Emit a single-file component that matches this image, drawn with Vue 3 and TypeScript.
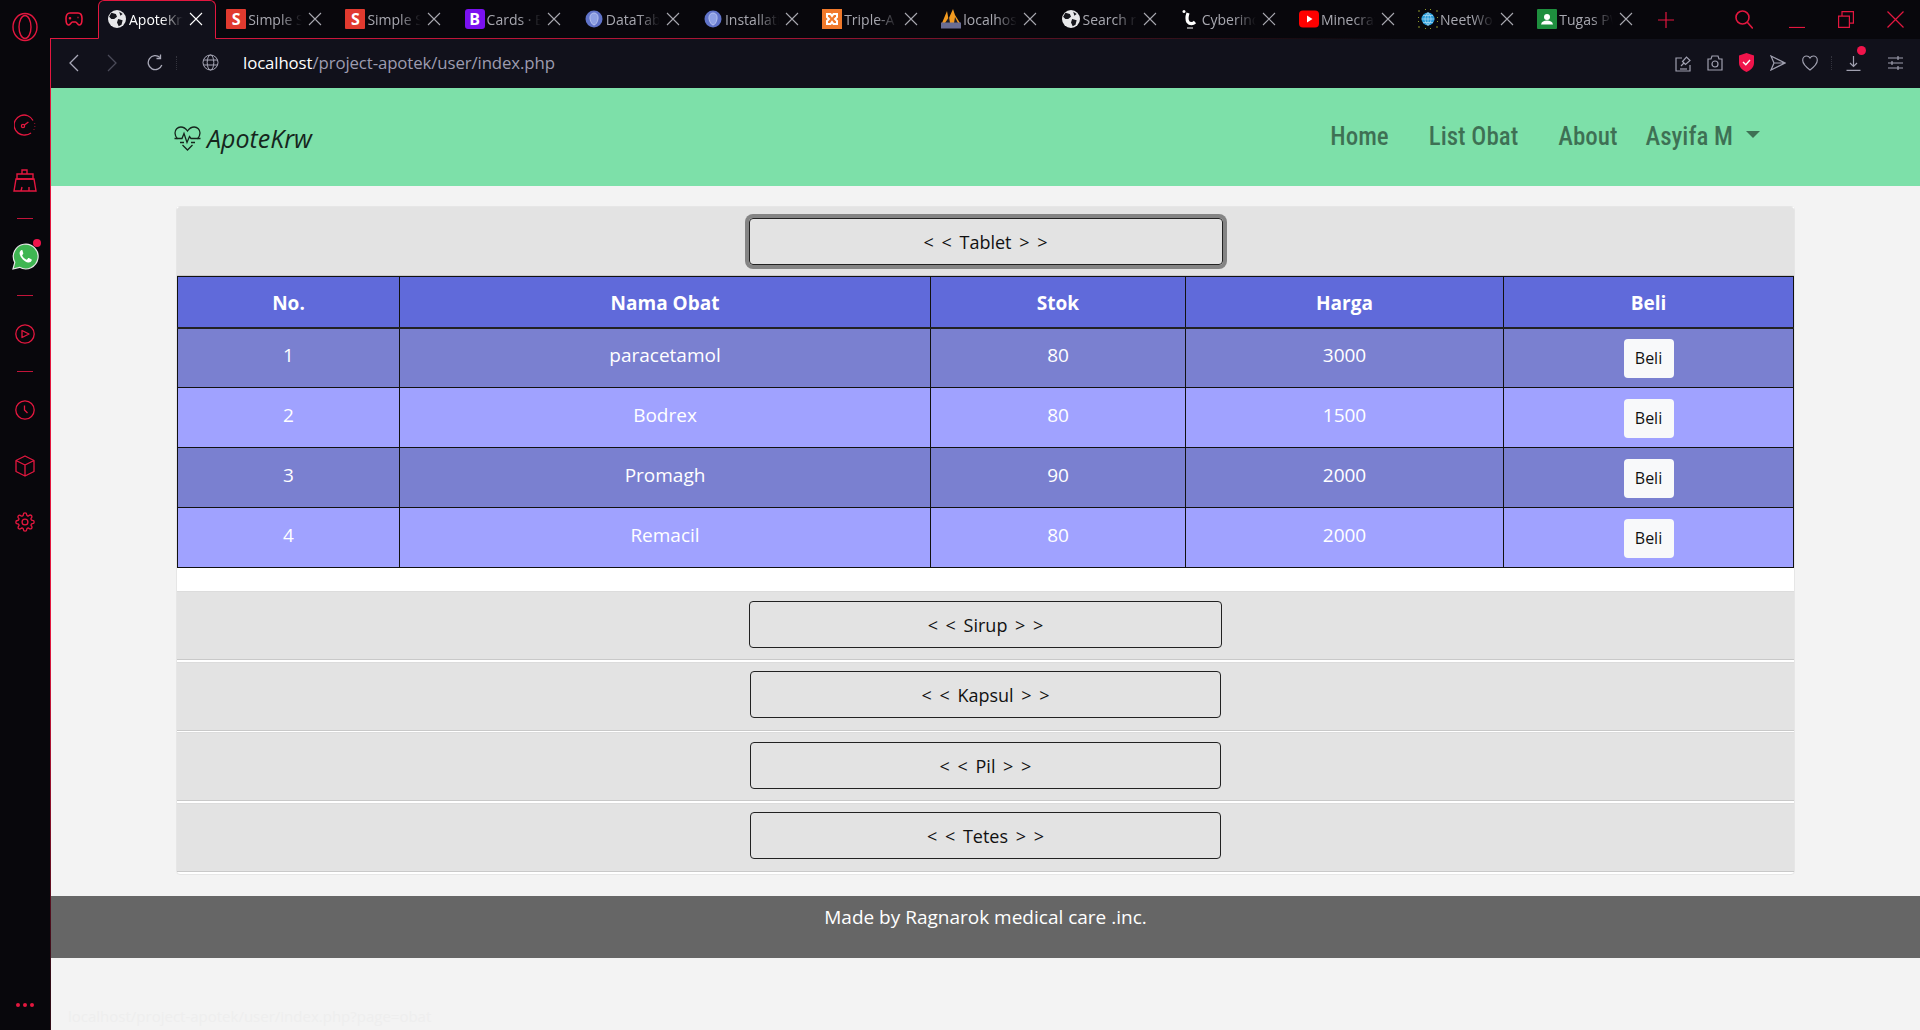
<script setup lang="ts">
interface Tab { title: string; icon: string; active?: boolean }
const tabs: Tab[] = [
  { title: 'ApoteKrw', icon: 'globe', active: true },
  { title: 'Simple Sidebar', icon: 's' },
  { title: 'Simple Sidebar', icon: 's' },
  { title: 'Cards · Bootstrap', icon: 'b' },
  { title: 'DataTables', icon: 'orb' },
  { title: 'Installation', icon: 'orb' },
  { title: 'Triple-A', icon: 'xampp' },
  { title: 'localhost', icon: 'pma' },
  { title: 'Search results', icon: 'globe' },
  { title: 'Cyberindo', icon: 'cyber' },
  { title: 'Minecraft', icon: 'yt' },
  { title: 'NeetWork', icon: 'neet' },
  { title: 'Tugas PWD', icon: 'class' }
]
interface Row { no: number; nama: string; stok: number; harga: number }
const rows: Row[] = [
  { no: 1, nama: 'paracetamol', stok: 80, harga: 3000 },
  { no: 2, nama: 'Bodrex', stok: 80, harga: 1500 },
  { no: 3, nama: 'Promagh', stok: 90, harga: 2000 },
  { no: 4, nama: 'Remacil', stok: 80, harga: 2000 }
]
const others = [
  { name: 'Sirup', width: 473 },
  { name: 'Kapsul', width: 471 },
  { name: 'Pil', width: 471 },
  { name: 'Tetes', width: 471 }
]
</script>

<template>
  <div class="browser">
    <aside class="side">
      <svg class="logo" width="26" height="30" viewBox="0 0 26 30" fill="none" stroke="#e3173f" stroke-width="1.4">
        <ellipse cx="13" cy="15" rx="12" ry="13.5" />
        <ellipse cx="13" cy="15" rx="6" ry="11.5" />
      </svg>
      <div class="side-icons">
        <svg class="si s1" width="22" height="22" viewBox="0 0 22 22" fill="none" stroke="#e3173f" stroke-width="1.3">
          <path d="M19 6.5A10 10 0 1 0 11 21a10 10 0 0 0 6-2" /><path d="M20.6 9v.6M20.8 12v.6M20 15v.6" /><circle cx="9" cy="12" r="1.6" /><path d="M10.4 11l4-3" />
        </svg>
        <svg class="si s2" width="24" height="24" viewBox="0 0 24 24" fill="none" stroke="#e3173f" stroke-width="1.4">
          <path d="M9 5V1h5v4" /><path d="M4 5h16v5H4z" /><path d="M3 10h18l2 12H1z" /><path d="M8 22l1-4M16 22v-4" />
        </svg>
        <span class="rule r1"></span>
        <div class="wa">
          <svg width="27" height="27" viewBox="0 0 27 27">
            <path d="M1 26l1.8-6.6A12.4 12.4 0 1 1 7.600 24.300z" fill="#3fb652" stroke="#e8e8e8" stroke-width="1.200" />
            <path d="M9.500 7c-1.200.6-2.200 2-1.800 4 .6 3.500 4.800 8 8.500 8.500 1.800.2 3-.8 3.500-2 .2-.6 0-1-.4-1.200l-2.400-1.200c-.5-.2-.8 0-1 .3l-.8 1c-.3.300-.6.300-1 .1-1.600-.8-3-2.100-3.800-3.700-.2-.4-.1-.6.100-.9l.7-.9c.2-.3.200-.6.100-.9L10.400 7.300c-.2-.4-.5-.5-.9-.3z" fill="#fff" />
          </svg>
          <span class="dot"></span>
        </div>
        <span class="rule r2"></span>
        <svg class="si s3" width="20" height="20" viewBox="0 0 20 20" fill="none" stroke="#e3173f" stroke-width="1.3">
          <circle cx="10" cy="10" r="9.200" /><path d="M7 6.500v7l7-3.500z" stroke-linejoin="round" />
        </svg>
        <span class="rule r3"></span>
        <svg class="si s4" width="20" height="20" viewBox="0 0 20 20" fill="none" stroke="#e3173f" stroke-width="1.3">
          <circle cx="10" cy="10" r="9.200" /><path d="M9.500 5.500V10l3 3" />
        </svg>
        <svg class="si s5" width="20" height="22" viewBox="0 0 20 22" fill="none" stroke="#e3173f" stroke-width="1.3">
          <path d="M10 1l9 4.500v11L10 21l-9-4.500v-11zM1 5.500L10 10l9-4.500M10 10v11" stroke-linejoin="round" />
        </svg>
        <svg class="si s6" width="20" height="20" viewBox="0 0 24 24" fill="none" stroke="#e3173f" stroke-width="1.600">
          <circle cx="12" cy="12" r="3.500" />
          <path d="M19.400 15a1.650 1.650 0 0 0 .33 1.820l.06.06a2 2 0 1 1-2.830 2.830l-.06-.06a1.650 1.650 0 0 0-2.800 1.170V21a2 2 0 1 1-4 0v-.09a1.650 1.650 0 0 0-2.900-1.100l-.06.06a2 2 0 1 1-2.830-2.830l.06-.06a1.650 1.650 0 0 0-1.170-2.800H3a2 2 0 1 1 0-4h.09a1.650 1.650 0 0 0 1.100-2.900l-.06-.06a2 2 0 1 1 2.830-2.830l.06.06a1.650 1.650 0 0 0 1.820.33H9a1.650 1.650 0 0 0 1-1.510V3a2 2 0 1 1 4 0v.09a1.650 1.650 0 0 0 2.800 1.170l.06-.06a2 2 0 1 1 2.830 2.830l-.06.06a1.650 1.650 0 0 0-.33 1.820V9a1.650 1.650 0 0 0 1.510 1H21a2 2 0 1 1 0 4h-.09a1.650 1.650 0 0 0-1.510 1z" />
        </svg>
      </div>
      <div class="more"><i></i><i></i><i></i></div>
    </aside>

    <div class="main">
      <header class="strip">
        <svg class="game" width="18" height="14" viewBox="0 0 18 14" fill="none" stroke="#f0193f" stroke-width="1.600">
          <path d="M5 1h8c2.500 0 4 2 4 5.500 0 4-1 6.500-2.500 6.500-1.800 0-2.500-3-4-3H7.500C6 10 5.300 13 3.500 13 2 13 1 10.500 1 6.500 1 3 2.500 1 5 1z" /><path d="M5 5v2.500M3.800 6.200h2.400M12.500 5.500h1" />
        </svg>
        <div class="tabs">
          <div v-for="t in tabs" :key="t.title + t.icon" class="tab" :class="{ active: t.active }">
            <span class="fav">
              <svg v-if="t.icon === 'globe'" viewBox="0 0 16 16" width="18" height="18"><circle cx="8" cy="8" r="8" fill="#e8e8ea" /><path d="M3 2.500l4 1 1 2.500-2.500 2L3 8 1 6zM9 8l4 1-1 4-2.500 1.500L8 11z" fill="#16161c" /><path d="M10 1.500l3 2-2 1.500z" fill="#16161c" /></svg>
              <span v-else-if="t.icon === 's'" class="sq red">S</span>
              <span v-else-if="t.icon === 'b'" class="sq purple">B</span>
              <svg v-else-if="t.icon === 'orb'" viewBox="0 0 18 18" width="18" height="18"><circle cx="9" cy="9" r="8.500" fill="#6073c9" /><path d="M9 3c3 0 4.500 2.500 4 6s-2.500 6-4 6-3.500-3-4-6 1-6 4-6z" fill="#8ea0e4" stroke="#c1cbf2" stroke-width=".8" /></svg>
              <svg v-else-if="t.icon === 'xampp'" viewBox="0 0 20 20" width="20" height="20"><rect width="20" height="20" fill="#f0792b" /><path d="M5 5h3.500l1.500 2 1.500-2H15v3l-2 2 2 2v3h-3.500L10 13l-1.500 2H5v-3l2-2-2-2z" fill="none" stroke="#fff" stroke-width="2" /></svg>
              <svg v-else-if="t.icon === 'pma'" viewBox="0 0 20 20" width="20" height="20"><path d="M1 14L6 2l1.500 8L12 0l2 6 5 8z" fill="#f29a1f" /><path d="M4 14L8 8l1 6zM13 14l1-6 3 6z" fill="#1f1f29" /><rect y="13.500" width="20" height="6" fill="#6a6d93" /></svg>
              <svg v-else-if="t.icon === 'cyber'" viewBox="0 0 18 20" width="18" height="20"><circle cx="3" cy="2.500" r="1.500" fill="#fff" /><path d="M7 4c-1 3-2 6 0 9 2 2.500 5 2 7 0" fill="none" stroke="#fff" stroke-width="3.200" /><path d="M6 19h6" stroke="#fff" /></svg>
              <svg v-else-if="t.icon === 'yt'" viewBox="0 0 20 18" width="20" height="18"><rect width="20" height="17" y=".5" rx="4" fill="#f00" /><path d="M8 5.500v7l5.500-3.500z" fill="#fff" /></svg>
              <svg v-else-if="t.icon === 'neet'" viewBox="0 0 20 20" width="20" height="20"><circle cx="10" cy="10" r="6.500" fill="#2b9bd8" /><path d="M3.500 10h13M10 3.500v13M5 6.500h10M5 13.500h10M10 3.500c-4 4-4 9 0 13M10 3.500c4 4 4 9 0 13" stroke="#bfe6fa" stroke-width=".6" fill="none" /><path d="M1 1v2M7 .5h1M12 .5h1M19 1v2M1 17v2M7 19.500h1M12 19.500h1M19 17v2M.5 8v1M.5 12v1M19.500 8v1M19.500 12v1" stroke="#8f9a2a" /></svg>
              <svg v-else viewBox="0 0 20 20" width="20" height="20"><rect width="20" height="20" rx="1" fill="#1e8e3e" /><circle cx="10" cy="8" r="3" fill="#fff" /><path d="M4 15.500c.5-3 3-4 6-4s5.500 1 6 4z" fill="#fff" /></svg>
            </span>
            <span class="title">{{ t.title }}</span>
            <svg class="x" width="14" height="14" viewBox="0 0 14 14" fill="none" stroke="currentColor" stroke-width="1.100"><path d="M1 1l12 12M13 1L1 13" /></svg>
          </div>
          <svg class="plus" width="16" height="16" viewBox="0 0 16 16" stroke="#e3173f" stroke-width="1.200"><path d="M8 0v16M0 8h16" /></svg>
        </div>
        <div class="win">
          <svg class="find" width="18" height="19" viewBox="0 0 18 19" fill="none" stroke="#e3173f" stroke-width="1.600"><circle cx="7.500" cy="7.500" r="6.500" /><path d="M12.300 12.300l5.500 6.200" /></svg>
          <svg class="min" width="16" height="16" viewBox="0 0 16 16" stroke="#e3173f" stroke-width="1.200"><path d="M0 15.500h16" /></svg>
          <svg width="16" height="17" viewBox="0 0 16 17" fill="none" stroke="#e3173f" stroke-width="1.200"><path d="M.6 5.100h10.800v11.300H.6zM4 5.100V.6h11.400v11.500h-4" /></svg>
          <svg width="17" height="17" viewBox="0 0 17 17" fill="none" stroke="#e3173f" stroke-width="1.200"><path d="M.5.500l16 16M16.500.500l-16 16" /></svg>
        </div>
      </header>

      <div class="lower">
        <div class="toolbar">
          <svg width="10" height="18" viewBox="0 0 10 18" fill="none" stroke="#a9a9b8" stroke-width="1.300"><path d="M9 1L1 9l8 8" /></svg>
          <svg class="fwd" width="10" height="18" viewBox="0 0 10 18" fill="none" stroke="#4a4a58" stroke-width="1.300"><path d="M1 1l8 8-8 8" /></svg>
          <svg class="rel" width="17" height="17" viewBox="0 0 17 17" fill="none" stroke="#a9a9b8" stroke-width="1.300"><path d="M14.800 11A7 7 0 1 1 13 3.500" /><path d="M13.500.5v4h-4" /></svg>
          <span class="vd"></span>
          <svg class="earth" width="17" height="17" viewBox="0 0 17 17" fill="none" stroke="#a9a9b8" stroke-width="1"><circle cx="8.500" cy="8.500" r="7.500" /><ellipse cx="8.500" cy="8.500" rx="3.300" ry="7.500" /><path d="M1.500 6h14M1.500 11h14" /></svg>
          <div class="url"><b>localhost</b>/project-apotek/user/index.php</div>
          <div class="tools">
            <svg width="16" height="18" viewBox="0 0 16 18" fill="none" stroke="#a0a0b0" stroke-width="1.200"><path d="M7 4H1v13h14v-6" /><path d="M6 12l3-3-1.500-1.500 4-4.500 3.500 3.500-4.500 4L9 9" /><path d="M5 15h7" /></svg>
            <svg width="16" height="16" viewBox="0 0 16 16" fill="none" stroke="#a0a0b0" stroke-width="1.200"><path d="M1 4h3l1-3h6l1 3h3v11H1z" /><circle cx="8" cy="9" r="3" /></svg>
            <svg width="15" height="19" viewBox="0 0 15 19"><path d="M7.500 0L15 2.500V10c0 4-3.500 7.500-7.500 9C3.500 17.500 0 14 0 10V2.500z" fill="#f0144b" /><path d="M4 9l2.800 2.800L11 7" fill="none" stroke="#fff" stroke-width="1.400" /></svg>
            <svg width="16" height="16" viewBox="0 0 16 16" fill="none" stroke="#a0a0b0" stroke-width="1.200"><path d="M1 1l14 7-14 7 3-7zM4 8h11" /></svg>
            <svg width="16" height="16" viewBox="0 0 16 16" fill="none" stroke="#a0a0b0" stroke-width="1.200"><path d="M8 15C4 12 .7 9 .7 5.300 .7 2.800 2.600 1 4.600 1 6 1 7.300 1.800 8 3c.7-1.200 2-2 3.400-2 2 0 3.900 1.800 3.900 4.300C15.300 9 12 12 8 15z" /></svg>
            <span class="vd small"></span>
            <span class="dl">
              <svg width="15" height="16" viewBox="0 0 15 16" fill="none" stroke="#a0a0b0" stroke-width="1.200"><path d="M7.500 1v10M4 8l3.500 3.500L11 8M.5 15.400h14" /></svg>
              <i></i>
            </span>
            <svg class="tune" width="17" height="16" viewBox="0 0 17 16" fill="none" stroke="#a0a0b0" stroke-width="1.200"><path d="M1 3h15M1 8h15M1 13h15M11 1v4M5 6v4M11 11v4" /></svg>
          </div>
        </div>

        <div class="page">
          <nav class="navbar">
            <a class="brand">
              <svg width="27" height="25" viewBox="0 0 27 25" fill="none" stroke="#16261d" stroke-width="1.300">
                <path d="M3.500 13C1.500 10.500 1 9 1 7c0-3.300 2.500-6 5.800-6 2.800 0 5 1.500 6.700 4 1.700-2.500 3.900-4 6.700-4C23.500 1 26 3.700 26 7c0 2-.5 3.500-2.500 6" />
                <path d="M0.500 12.500H8l2-5 3 9 2.500-6 1.500 2h9.500" />
                <path d="M6 16.500h4M17 16.500h4M8.500 19l5 5 5-5" />
              </svg>
              <span>ApoteKrw</span>
            </a>
            <ul class="links">
              <li>Home</li>
              <li>List Obat</li>
              <li>About</li>
              <li class="user">Asyifa M <i class="caret"></i></li>
            </ul>
          </nav>

          <section class="accordion">
            <div class="card first">
              <div class="card-head">
                <button class="toggle focus">&lt; &lt; Tablet &gt; &gt;</button>
              </div>
              <div class="card-body">
                <table>
                  <colgroup>
                    <col class="c1" /><col class="c2" /><col class="c3" /><col class="c4" /><col />
                  </colgroup>
                  <thead>
                    <tr><th>No.</th><th>Nama Obat</th><th>Stok</th><th>Harga</th><th>Beli</th></tr>
                  </thead>
                  <tbody>
                    <tr v-for="r in rows" :key="r.no">
                      <td>{{ r.no }}</td>
                      <td>{{ r.nama }}</td>
                      <td>{{ r.stok }}</td>
                      <td>{{ r.harga }}</td>
                      <td class="act"><button class="beli">Beli</button></td>
                    </tr>
                  </tbody>
                </table>
              </div>
            </div>
            <div v-for="o in others" :key="o.name" class="card">
              <div class="card-head">
                <button class="toggle" :style="{ width: o.width + 'px' }">&lt; &lt; {{ o.name }} &gt; &gt;</button>
              </div>
            </div>
          </section>

          <footer class="foot">Made by Ragnarok medical care .inc.</footer>
          <div class="status">localhost/project-apotek/user/index.php?page=obat</div>
        </div>
      </div>
    </div>
  </div>
</template>

<style>
html, body { margin: 0; background: #f3f3f3; overflow: hidden; }
</style>

<style scoped>
.browser {
  display: flex;
  width: 1920px;
  height: 1030px;
  overflow: hidden;
  font-family: "Open Sans", "Noto Sans", sans-serif;
  background: #f3f3f3;
}
.side {
  width: 50px;
  flex: none;
  background: #08070c;
  display: flex;
  flex-direction: column;
  align-items: center;
}
.logo { margin-top: 12px; }
.side-icons { display: flex; flex-direction: column; align-items: center; margin-top: 72px; }
.si { display: block; }
.s2 { margin-top: 33px; }
.rule { width: 16px; height: 1px; background: #c2143a; }
.r1 { margin-top: 25px; }
.wa { position: relative; margin-top: 24px; height: 27px; }
.wa svg { display: block; }
.dot { position: absolute; right: -2px; top: -4px; width: 8px; height: 8px; border-radius: 50%; background: #f0144b; }
.r2 { margin-top: 25px; }
.s3 { margin-top: 28px; }
.r3 { margin-top: 27px; }
.s4 { margin-top: 28px; }
.s5 { margin-top: 35px; }
.s6 { margin-top: 35px; }
.more { margin-top: auto; margin-bottom: 23px; display: flex; gap: 3px; }
.more i { width: 4px; height: 4px; border-radius: 50%; background: #e3173f; }

.main { flex: 1; min-width: 0; display: flex; flex-direction: column; }
.strip {
  height: 39px;
  flex: none;
  background: #08070c;
  display: flex;
  align-items: flex-start;
  position: relative;
  box-sizing: border-box;
  background-image: linear-gradient(90deg, #e3173f 0, #a01533 40%, #2a1018 62%, #08070c 72%);
  background-size: 100% 1px;
  background-position: 0 38px;
  background-repeat: no-repeat;
}
.game { margin: 12px 0 0 15px; flex: none; }
.tabs { display: flex; align-items: flex-start; margin-left: 15px; }
.tab {
  width: 119.2px;
  height: 39px;
  box-sizing: border-box;
  padding-left: 9px;
  padding-bottom: 1px;
  display: flex;
  align-items: center;
  flex: none;
  color: #a8a8b0;
  font-size: 14px;
  position: relative;
}
.tab.active {
  color: #fff;
  background: #11111b;
  border: 1px solid #e3173f;
  border-bottom-color: #11111b;
  border-radius: 6px 6px 0 0;
  width: 118.2px;
  margin-right: 1px;
  padding-left: 8px;
}
.fav { width: 20px; height: 20px; display: flex; align-items: center; justify-content: center; flex: none; margin-right: 2px; }
.sq {
  width: 20px; height: 20px; display: flex; align-items: center; justify-content: center;
  color: #fff; font-weight: 700; font-size: 16px; line-height: 1; border-radius: 1px;
}
.red { background: #e13a2f; }
.purple { background: #7a11f0; border-radius: 3px; }
.title {
  width: 54px;
  overflow: hidden;
  white-space: nowrap;
  -webkit-mask-image: linear-gradient(90deg, #000 60%, transparent 100%);
  mask-image: linear-gradient(90deg, #000 60%, transparent 100%);
}
.x { position: absolute; left: 91px; top: 12px; }
.tab.active .x { left: 90px; top: 11px; }
.plus { margin: 12px 0 0 11px; flex: none; }
.win { display: flex; align-items: center; position: absolute; right: 16px; top: 10px; gap: 33px; }
.find { margin-right: 3px; }
.min { margin-top: 0; }

.lower {
  flex: 1;
  min-height: 0;
  display: flex;
  flex-direction: column;
  border-left: 1px solid transparent;
  border-image: linear-gradient(180deg, #e3173f 0, #e3173f 60%, #300c16 95%) 1;
}
.toolbar {
  height: 49px;
  box-sizing: border-box;
  flex: none;
  background: #11111b;
  display: flex;
  align-items: center;
  padding: 0 0 2px 18px;
}
.fwd { margin-left: 28px; }
.rel { margin-left: 30px; }
.vd { width: 1px; height: 14px; margin-left: 12px; border-left: 1px dotted #33333d; }
.earth { margin-left: 24px; }
.url { margin-left: 24px; color: #9d9cb0; font-size: 16.8px; letter-spacing: -0.1px; }
.url b { color: #fff; font-weight: 400; }
.tools { margin-left: auto; margin-right: 16px; display: flex; align-items: center; gap: 16px; }
.tools .vd.small { margin: 0 -3px; }
.dl { position: relative; display: flex; }
.dl i { position: absolute; right: -5px; top: -9px; width: 9px; height: 9px; border-radius: 50%; background: #f0144b; }
.tune { margin-left: 10px; }

.page { flex: 1; min-height: 0; position: relative; background: #f3f3f3; display: flex; flex-direction: column; }
.navbar {
  height: 98px;
  flex: none;
  background: #7de0a9;
  display: flex;
  align-items: center;
  justify-content: space-between;
  padding: 0 160px 0 123px;
}
.brand { display: flex; align-items: center; gap: 6px; color: #16261d; font-style: italic; font-size: 25px; margin-top: 2px; }
.links {
  list-style: none; margin: 0 0 2px; padding: 0; display: flex; align-items: center; gap: 40px;
  font-family: Roboto, "Liberation Sans", sans-serif; font-stretch: condensed;
  color: rgba(0, 0, 0, 0.5); font-size: 25px; font-weight: 500;
}
.user { margin-left: -12px; display: flex; align-items: center; gap: 13px; }
.caret { width: 0; height: 0; border: 7px solid transparent; border-top-color: rgba(0, 0, 0, 0.5); border-bottom: 0; margin-top: -3px; }

.accordion {
  width: 1619px;
  margin: 20px 0 0 125px;
  background: #fff;
  border: 1px solid #e6e6e6;
  border-radius: 4px;
  box-sizing: border-box;
  padding-bottom: 2px;
  flex: none;
}
.card { background: #fff; }
.card + .card { margin-top: 1.5px; }
.card-head {
  height: 69px;
  box-sizing: border-box;
  background: #e3e3e3;
  border-top: 1px solid #dcdcdc;
  border-bottom: 1px solid #c9c9c9;
  display: flex;
  align-items: center;
  justify-content: center;
  padding-bottom: 2.5px;
}
.first .card-head { border-top: 0; border-radius: 3px 3px 0 0; padding-bottom: 1px; }
.toggle {
  width: 474px;
  height: 47px;
  box-sizing: border-box;
  background: transparent;
  border: 1px solid #222;
  border-radius: 4px;
  padding: 1px 0 0;
  font: inherit;
  font-size: 18px;
  word-spacing: 3px;
  color: #111;
}
.focus { box-shadow: 0 0 0 4px #848484; margin-top: 1px; }
.card-body { background: #fff; padding-bottom: 21.5px; }
table {
  width: 100%;
  table-layout: fixed;
  border-collapse: collapse;
  color: #fff;
  font-size: 19px;
  border: 1px solid #111;
}
.c1 { width: 222px; }
.c2 { width: 531px; }
.c3 { width: 255px; }
.c4 { width: 318px; }
th {
  box-sizing: border-box;
  height: 51px;
  background: #606ada;
  border: 1px solid #111;
  border-bottom: 2px solid #222;
  font-weight: 700;
  padding: 2px 0 0;
}
td { box-sizing: border-box; height: 60px; border: 1px solid #111; padding: 0 0 6px; text-align: center; }
tbody tr:nth-child(odd) td { background: #7a80d0; }
tbody tr:nth-child(even) td { background: #a0a2ff; }
td.act { padding: 1px 0 0; }
.beli {
  display: block;
  margin: 0 auto;
  width: 50px;
  height: 39px;
  border: 0;
  border-radius: 4px;
  background: #f8f9fa;
  color: #111;
  font: inherit;
  font-size: 16px;
  padding: 0;
}
.foot {
  height: 62px;
  margin-top: 21px;
  flex: none;
  background: #666;
  color: #fff;
  font-size: 19px;
  text-align: center;
  line-height: 42px;
}
.status {
  position: absolute;
  left: 0;
  bottom: 0;
  padding: 4px 8px 4px 17px;
  font-size: 15px;
  color: #eeeeee;
  white-space: nowrap;
}
</style>
